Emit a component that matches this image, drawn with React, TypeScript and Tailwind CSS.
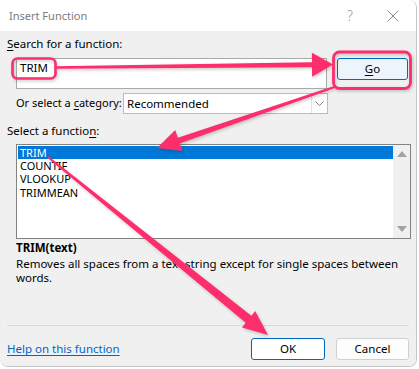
import React from "react";

type P = [number, number];

function arrowPoints(T: P, Pt: P, wt: number, ws: number, hl: number, hw: number): string {
  const dx = Pt[0] - T[0];
  const dy = Pt[1] - T[1];
  const len = Math.hypot(dx, dy);
  const ux = dx / len;
  const uy = dy / len;
  const nx = -uy;
  const ny = ux;
  const B: P = [Pt[0] - ux * hl, Pt[1] - uy * hl];
  const pts: P[] = [
    [T[0] + (nx * wt) / 2, T[1] + (ny * wt) / 2],
    [B[0] + (nx * ws) / 2, B[1] + (ny * ws) / 2],
    [B[0] + nx * hw, B[1] + ny * hw],
    Pt,
    [B[0] - nx * hw, B[1] - ny * hw],
    [B[0] - (nx * ws) / 2, B[1] - (ny * ws) / 2],
    [T[0] - (nx * wt) / 2, T[1] - (ny * wt) / 2],
  ];
  return pts.map((p) => `${p[0].toFixed(1)},${p[1].toFixed(1)}`).join(" ");
}

const PINK = "#fc2d6c";

function Overlay() {
  return (
    <svg className="absolute left-0 top-0 pointer-events-none" width={419} height={369} viewBox="0 0 419 369">
      <defs>
        <filter id="sh" x="-20%" y="-20%" width="140%" height="140%">
          <feDropShadow dx="1" dy="1.5" stdDeviation="1.5" floodColor="#000" floodOpacity="0.22" />
        </filter>
      </defs>
      <g filter="url(#sh)">
        <rect x={12.5} y={58.5} width={43} height={20} rx={5} fill="none" stroke={PINK} strokeWidth={2.6} />
        <rect x={333.5} y={52} width={77} height={36.5} rx={6} fill="none" stroke={PINK} strokeWidth={2.8} />
        <polygon points={arrowPoints([56, 67.5], [333, 64.5], 2.6, 5, 21, 12)} fill={PINK} />
        <polygon points={arrowPoints([336, 86.5], [157, 148], 2.4, 6, 23, 11)} fill={PINK} />
        <polygon points={arrowPoints([48, 157], [268, 335], 2, 9, 25, 10.5)} fill={PINK} />
      </g>
    </svg>
  );
}

export default function App() {
  const font = { fontFamily: '"Noto Sans", "Open Sans", sans-serif' };
  return (
    <div className="relative w-[419px] h-[369px] bg-white overflow-hidden" style={font}>
      <div className="w-[417px] h-[367px] rounded-b-[8px] rounded-tr-[8px] border border-[#c4c4c4] border-t-0 border-l-0 overflow-hidden flex flex-col text-[11.5px] text-black whitespace-nowrap">
        {/* title bar */}
        <div className="h-[31px] bg-white flex items-center pl-[9px] pr-[14px] shrink-0">
          <span className="text-[11px] text-[#7b7b7b] leading-none">Insert Function</span>
          <span className="ml-auto text-[14px] text-[#9a9a9a] leading-none mr-[34px] font-light">?</span>
          <svg width="12" height="12" viewBox="0 0 12 12" className="mr-[3px]">
            <path d="M0.5 0.5 L11.5 11.5 M11.5 0.5 L0.5 11.5" stroke="#8a8a8a" strokeWidth="1" fill="none" />
          </svg>
        </div>
        {/* body */}
        <div className="flex-1 bg-[#f0f0f0] flex flex-col px-[7px]">
          <div className="pt-[5px] leading-[16px]">
            <span className="underline underline-offset-2">S</span>earch for a function:
          </div>
          <div className="flex mt-[6px] ml-[9px]">
            <div className="w-[311px] h-[31px] bg-white border border-[#a9a9a9] pl-[3px] leading-[18px]">TRIM</div>
            <button className="ml-[10px] w-[71px] h-[22px] rounded-[3px] border border-[#0067c0] bg-[#eef4fb] text-[11.5px] leading-none">
              <span className="underline underline-offset-2">G</span>o
            </button>
          </div>
          <div className="flex items-center mt-[4px] ml-[9px] h-[21px]">
            <span className="w-[107px] shrink-0 text-[11px]">
              Or select a <span className="underline underline-offset-2">c</span>ategory:
            </span>
            <div className="w-[205px] h-[21px] bg-white border border-[#bcbcbc] flex items-center">
              <span className="pl-[3px] flex-1">Recommended</span>
              <div className="w-[16px] h-full border-l border-[#e3e3e3] flex items-center justify-center">
                <svg width="9" height="5" viewBox="0 0 9 5">
                  <path d="M0.5 0.5 L4.5 4.5 L8.5 0.5" stroke="#707070" strokeWidth="0.9" fill="none" />
                </svg>
              </div>
            </div>
          </div>
          <div className="mt-[9px] leading-[16px]">
            Select a functio<span className="underline underline-offset-2">n</span>:
          </div>
          <div className="mt-[5px] ml-[9px] w-[395px] h-[95px] bg-white border border-[#828282] flex">
            <div className="flex-1 pt-[1px] pl-[1px] leading-[13.4px] text-[11px]">
              <div className="h-[13px] bg-[#0078d7] text-white pl-[2px] leading-[13px]">TRIM</div>
              <div className="h-[13.4px] pl-[2px]">COUNTIF</div>
              <div className="h-[13.4px] pl-[2px]">VLOOKUP</div>
              <div className="h-[13.4px] pl-[2px]">TRIMMEAN</div>
            </div>
            <div className="w-[17px] bg-[#f0f0f0] flex flex-col items-center justify-between py-[6px]">
              <svg width="10" height="6" viewBox="0 0 10 6">
                <path d="M5 0 L10 6 L0 6 Z" fill="#a3a3a3" />
              </svg>
              <svg width="10" height="6" viewBox="0 0 10 6">
                <path d="M0 0 L10 0 L5 6 Z" fill="#a3a3a3" />
              </svg>
            </div>
          </div>
          <div className="mt-[1px] ml-[9px] leading-[16px] font-bold">TRIM(text)</div>
          <div className="mt-[1px] ml-[9px] leading-[14px]">
            Removes all spaces from a text string except for single spaces between
            <br />
            words.
          </div>
          <div className="flex-1" />
          <div className="h-px bg-[#dadada]" />
          <div className="flex items-center h-[22px] mt-[12px] mb-[6px]">
            <a className="text-[#0066cc] underline underline-offset-2">Help on this function</a>
            <button className="ml-auto w-[74px] h-[22px] rounded-[3px] border border-[#0067c0] bg-white text-[11.5px] leading-none">
              OK
            </button>
            <button className="ml-[11px] w-[73px] h-[22px] rounded-[3px] border border-[#d0d0d0] bg-[#fdfdfd] text-[11.5px] leading-none">
              Cancel
            </button>
          </div>
        </div>
      </div>
      <Overlay />
    </div>
  );
}
